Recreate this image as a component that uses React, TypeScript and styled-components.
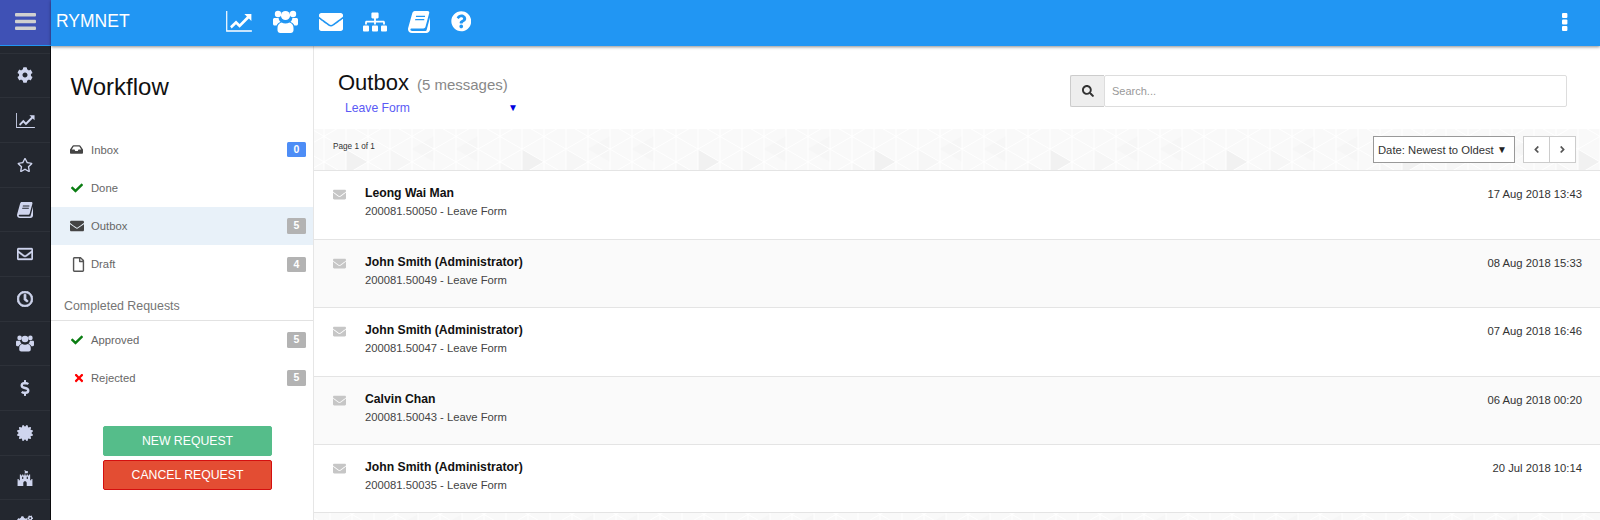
import React from "react";
import styled, { createGlobalStyle } from "styled-components";
import {
  FaCertificate, FaCheck, FaCog, FaCogs,
  FaEnvelope, FaFortAwesome, FaInbox, FaQuestionCircle, FaRegClock, FaRegEnvelope, FaRegFile, FaRegStar,
  FaSearch, FaSitemap, FaTimes, FaDollarSign, FaAngleLeft, FaAngleRight,
} from "react-icons/fa";

type IconProps = { size?: number };

const LineChartIcon = ({ size = 26 }: IconProps) => (
  <svg width={size} height={size * 0.8} viewBox="0 0 26 21" fill="currentColor">
    <path d="M0 0h1.2v19.4H26V21H0z" />
    <path d="M4 15.5l6-6 3.6 3.6L21 5.6l-2.6-2.6H25.5v7l-2.5-2.5-9.4 9.4-3.6-3.6-4.4 4.4z" />
  </svg>
);

const UsersIcon = ({ size = 25 }: IconProps) => (
  <svg width={size} height={size * 0.92} viewBox="0 0 25 23" fill="currentColor">
    <circle cx="5" cy="4" r="3.2" />
    <circle cx="20" cy="4" r="3.2" />
    <circle cx="12.5" cy="5.5" r="4.6" />
    <path d="M0 9.5C0 8.6.7 8 1.6 8h4c.2 1.6.9 3 2 4-1.8.6-3.2 1.8-4 3.5H1.6C.7 15.5 0 14.900 0 14zM25 9.500c0-.9-.7-1.500-1.600-1.500h-4c-.2 1.600-.9 3-2 4 1.800.6 3.200 1.800 4 3.500h2c.9 0 1.600-.6 1.600-1.500z" />
    <path d="M8.500 12.500c2.400 1.400 5.600 1.400 8 0 2.500.6 4 2.800 4 5.500v2.200c0 1.600-1.200 2.800-2.800 2.800H7.300c-1.600 0-2.800-1.200-2.800-2.800V18c0-2.700 1.500-4.900 4-5.500z" />
  </svg>
);

const BookIcon = ({ size = 22 }: IconProps) => (
  <svg width={size} height={size} viewBox="0 0 23 23" fill="currentColor">
    <path d="M7 0h13.500c1.300 0 2 1 1.700 2.200L18.300 16.500c-.3 1.100-1.200 1.800-2.300 1.800H4c-1 0-1.600.5-1.500 1.300.100.7.7 1.200 1.700 1.200h14.200c.5 0 .8-.3 1-.8L23 6.700v13c-.4 1.900-1.900 3.300-3.800 3.300H4.200C1.800 23 0 21.300 0 19c0-.6.100-1.200.3-1.800L4.400 2.500C4.800 1 5.800 0 7 0z" />
    <path d="M8.500 5h9.300v1.300H8.200zM7.700 8.300H17v1.300H7.300z" fill="var(--book-line, #2196f3)" />
  </svg>
);

const BarsIcon = () => (
  <svg width="21" height="17" viewBox="0 0 21 17" fill="currentColor">
    <rect width="21" height="3.600" rx="1" />
    <rect y="6.700" width="21" height="3.600" rx="1" />
    <rect y="13.400" width="21" height="3.600" rx="1" />
  </svg>
);

const KebabIcon = () => (
  <svg width="6" height="18" viewBox="0 0 6 18" fill="currentColor">
    <rect width="5.400" height="5" rx="1" />
    <rect y="6.500" width="5.400" height="5" rx="1" />
    <rect y="13" width="5.400" height="5" rx="1" />
  </svg>
);

const tile = (() => {
  const w = 176;
  const h = 50.8;
  const r = 25.4;
  let lines = "";
  for (let c = 0; c <= 8; c++) {
    lines += `M${c * 22} 0V${h}`;
    for (let k = -2; k < 4; k++) {
      const y = (c % 2 === 0 ? 7.3 : 20) + k * r;
      lines += `M${c * 22} ${y}l22 12.7M${c * 22} ${y}l22 -12.7`;
    }
  }
  const svg = `<svg xmlns="http://www.w3.org/2000/svg" width="${w}" height="${h}"><rect width="${w}" height="${h}" fill="#f9f9f9"/><g fill="#f6f6f6"><path d="M66 20v25.400L88 32.700z"/><path d="M110 7.300v25.400L88 20z"/><path d="M154 7.300v25.400L132 20z"/><path d="M0 32.700v18.100H22V45.400z"/></g><path d="M22 20v25.400L44 32.700z" fill="#f1f1f1"/><path d="${lines}" stroke="#fff" stroke-width="1" fill="none"/></svg>`;
  return encodeURIComponent(svg);
})();

const Global = createGlobalStyle`
  html, body { margin: 0; padding: 0; height: 100%; overflow: hidden; background: #fff; }
  body { font-family: "Liberation Sans", Arial, sans-serif; }
`;

const Page = styled.div`
  width: 1600px;
  height: 520px;
  display: grid;
  grid-template-columns: 51px 1fr;
  grid-template-rows: 46px 1fr;
  overflow: hidden;
`;

const MenuButton = styled.div`
  background: #3f51b5;
  color: #d0d0d0;
  display: flex;
  align-items: center;
  justify-content: center;
  border-bottom: 1px solid #2196f3;
  box-sizing: border-box;
  padding-bottom: 2px;
`;

const TopBar = styled.header`
  background: #2196f3;
  color: #fff;
  display: flex;
  align-items: center;
  padding-left: 5px;
  padding-right: 32px;
  box-shadow: 0 1px 3px rgba(0, 0, 0, 0.45);
  position: relative;
  z-index: 2;
`;

const Brand = styled.div`
  font-size: 17.5px;
  width: 170px;
  margin-top: -3px;
`;

const TopIcons = styled.nav`
  display: flex;
  align-items: center;
  gap: 18px;
  flex: 1;
  margin-top: -3px;
  --book-line: #2196f3;
`;

const TopIcon = styled.span<{ $w: number; $size?: number }>`
  width: ${(p) => p.$w}px;
  display: flex;
  justify-content: center;
  font-size: ${(p) => p.$size ?? 24}px;
`;

const Kebab = styled.div`
  display: flex;
  margin-top: -3px;
`;

const Rail = styled.aside`
  background: #23272f;
  border-right: 1px solid #0c0c0e;
  padding-top: 6.6px;
  overflow: hidden;
  display: flex;
  flex-direction: column;
  box-sizing: border-box;
  --book-line: #23272f;
`;

const RailItem = styled.div`
  flex: 0 0 44.7px;
  display: flex;
  align-items: center;
  justify-content: center;
  color: #cfd5ee;
  font-size: 16px;
  border-top: 1px solid #2d3139;
  box-sizing: border-box;
`;

const Body = styled.div`
  display: grid;
  grid-template-columns: 263px 1fr;
  min-height: 0;
`;

const Side = styled.section`
  border-right: 1px solid #e6e6e6;
  display: flex;
  flex-direction: column;
`;

const SideTitle = styled.h2`
  margin: 0;
  font-weight: 400;
  font-size: 24px;
  line-height: 28px;
  color: #111;
  padding: 27px 0 0 19.5px;
  height: 57.600px;
  flex: none;
`;

const NavRow = styled.div<{ $active?: boolean }>`
  height: 38.2px;
  flex: none;
  display: flex;
  align-items: center;
  background: ${(p) => (p.$active ? "#e8f1f9" : "transparent")};
  padding: 0 7px 0 0;
  font-size: 11.25px;
  color: #666;
`;

const NavIcon = styled.span<{ $color: string; $size?: number; $left?: number }>`
  width: 40px;
  padding-left: ${(p) => p.$left ?? 19}px;
  box-sizing: border-box;
  color: ${(p) => p.$color};
  font-size: ${(p) => p.$size ?? 13}px;
  display: flex;
  align-items: center;
`;

const NavLabel = styled.span`
  flex: 1;
`;

const Badge = styled.span<{ $blue?: boolean }>`
  width: 19px;
  height: 15.5px;
  background: ${(p) => (p.$blue ? "#4d8df6" : "#b3b3b3")};
  border-radius: 1.5px;
  color: #fff;
  font-size: 10.5px;
  font-weight: 700;
  line-height: 14px;
  text-align: center;
`;

const GroupTitle = styled.div`
  font-size: 12.4px;
  color: #757575;
  padding: 16px 0 6.5px 13px;
  line-height: 14px;
  border-bottom: 1px solid #e2e2e2;
  flex: none;
`;

const ActionStack = styled.div`
  display: flex;
  flex-direction: column;
  gap: 4px;
  padding: 29px 0 0 52px;
`;

const ActionButton = styled.button<{ $bg: string; $edge: string }>`
  width: 169px;
  height: 30px;
  background: ${(p) => p.$bg};
  border: 1px solid ${(p) => p.$edge};
  border-radius: 2px;
  color: #fff;
  font: 400 12.25px "Liberation Sans", Arial, sans-serif;
  padding: 0;
`;

const Main = styled.main`
  display: flex;
  flex-direction: column;
  min-width: 0;
`;

const MainHead = styled.div`
  height: 83px;
  flex: none;
  display: flex;
  justify-content: space-between;
  padding: 0 33px 0 24px;
  box-sizing: border-box;
`;

const TitleBlock = styled.div`
  width: 180px;
  padding-top: 24px;
`;

const MainTitle = styled.h1`
  margin: 0;
  font-weight: 400;
  font-size: 22px;
  line-height: 26px;
  color: #111;
  white-space: nowrap;
`;

const TitleCount = styled.small`
  font-size: 15px;
  color: #888;
  margin-left: 8px;
`;

const FormPicker = styled.div`
  display: flex;
  justify-content: space-between;
  align-items: center;
  font-size: 12.2px;
  color: #5a5af5;
  padding: 2px 0 0 7px;
  line-height: 16px;
  &::after { content: "▼"; color: #0000e0; font-size: 10px; }
`;

const SearchGroup = styled.div`
  display: flex;
  height: 32px;
  margin-top: 29px;
  width: 497px;
`;

const SearchAddon = styled.div`
  width: 34px;
  background: #eee;
  border: 1px solid #ccc;
  border-right: 0;
  border-radius: 2px 0 0 2px;
  display: flex;
  align-items: center;
  justify-content: center;
  color: #333;
  font-size: 12px;
  box-sizing: border-box;
`;

const SearchInput = styled.input`
  flex: 1;
  border: 1px solid #ddd;
  border-radius: 2px;
  padding: 0 7px;
  font: 11px "Liberation Sans", Arial, sans-serif;
  &::placeholder { color: #999; }
`;

const Strip = styled.div<{ $grow?: boolean }>`
  background: #f9f9f9 url("data:image/svg+xml,${tile}");
  background-position: ${(p) => (p.$grow ? "-6px -6px" : "10px 0")};
  ${(p) => (p.$grow ? "flex: 1;" : "height: 41.4px; flex: none;")}
  display: flex;
  align-items: center;
  padding: 0 24px 0 19px;
`;

const PageNote = styled.div`
  flex: 1;
  font-size: 8.2px;
  color: #333;
  margin-top: -6px;
`;

const SortBox = styled.div`
  width: 142px;
  height: 27px;
  box-sizing: border-box;
  border: 1px solid #999;
  background: #fff;
  display: flex;
  align-items: center;
  justify-content: space-between;
  padding: 0 7px 0 4px;
  font-size: 11.25px;
  color: #333;
  &::after { content: "▼"; font-size: 10px; color: #222; }
`;

const Pager = styled.div`
  margin-left: 8px;
  display: flex;
  height: 27px;
  border: 1px solid #ccc;
  box-sizing: border-box;
  background: #fff;
`;

const PagerCell = styled.div`
  width: 25px;
  display: flex;
  align-items: center;
  justify-content: center;
  color: #555;
  font-size: 11px;
  & + & { border-left: 1px solid #ccc; }
`;

const Row = styled.article<{ $alt: boolean }>`
  height: 68.4px;
  flex: none;
  box-sizing: border-box;
  border-top: 1px solid #e4e4e4;
  background: ${(p) => (p.$alt ? "#fafafa" : "#fff")};
  display: grid;
  grid-template-columns: 32px 1fr auto;
  padding: 15px 18px 0 19px;
`;

const RowIcon = styled.div`
  color: #c6c6c6;
  font-size: 13px;
  padding-top: 2px;
`;

const RowName = styled.div`
  font-size: 12.2px;
  font-weight: 700;
  color: #111;
  line-height: 14px;
`;

const RowSub = styled.div`
  font-size: 11.25px;
  color: #444;
  margin-top: 5px;
  line-height: 13px;
`;

const RowDate = styled.div`
  font-size: 11.25px;
  color: #333;
  line-height: 14px;
  padding-top: 1px;
`;

const RowEnd = styled.div`
  height: 1px;
  background: #e4e4e4;
  flex: none;
`;

const railIcons = [
  <FaCog key="a" />,
  <LineChartIcon key="b" size={19} />,
  <FaRegStar key="c" />,
  <BookIcon key="d" size={16} />,
  <FaRegEnvelope key="e" stroke="currentColor" strokeWidth={12} />,
  <FaRegClock key="f" stroke="currentColor" strokeWidth={30} />,
  <UsersIcon key="g" size={18} />,
  <FaDollarSign key="h" />,
  <FaCertificate key="i" />,
  <FaFortAwesome key="j" />,
  <FaCogs key="k" />,
];

const messages = [
  ["Leong Wai Man", "200081.50050 - Leave Form", "17 Aug 2018 13:43"],
  ["John Smith (Administrator)", "200081.50049 - Leave Form", "08 Aug 2018 15:33"],
  ["John Smith (Administrator)", "200081.50047 - Leave Form", "07 Aug 2018 16:46"],
  ["Calvin Chan", "200081.50043 - Leave Form", "06 Aug 2018 00:20"],
  ["John Smith (Administrator)", "200081.50035 - Leave Form", "20 Jul 2018 10:14"],
];

export default function App() {
  return (
    <Page>
      <Global />
      <MenuButton><BarsIcon /></MenuButton>
      <TopBar>
        <Brand>RYMNET</Brand>
        <TopIcons>
          <TopIcon $w={26}><LineChartIcon /></TopIcon>
          <TopIcon $w={31}><UsersIcon /></TopIcon>
          <TopIcon $w={24}><FaEnvelope /></TopIcon>
          <TopIcon $w={28}><FaSitemap /></TopIcon>
          <TopIcon $w={24}><BookIcon /></TopIcon>
          <TopIcon $w={24} $size={20.5}><FaQuestionCircle /></TopIcon>
        </TopIcons>
        <Kebab><KebabIcon /></Kebab>
      </TopBar>
      <Rail>
        {railIcons.map((icon, i) => <RailItem key={i}>{icon}</RailItem>)}
      </Rail>
      <Body>
        <Side>
          <SideTitle>Workflow</SideTitle>
          <NavRow><NavIcon $color="#444"><FaInbox /></NavIcon><NavLabel>Inbox</NavLabel><Badge $blue>0</Badge></NavRow>
          <NavRow><NavIcon $color="#0a7d12" $left={20} $size={12}><FaCheck /></NavIcon><NavLabel>Done</NavLabel></NavRow>
          <NavRow $active><NavIcon $color="#444" $size={14}><FaEnvelope /></NavIcon><NavLabel>Outbox</NavLabel><Badge>5</Badge></NavRow>
          <NavRow><NavIcon $color="#555" $left={20} $size={15}><FaRegFile /></NavIcon><NavLabel>Draft</NavLabel><Badge>4</Badge></NavRow>
          <GroupTitle>Completed Requests</GroupTitle>
          <NavRow><NavIcon $color="#0a7d12" $left={20} $size={12}><FaCheck /></NavIcon><NavLabel>Approved</NavLabel><Badge>5</Badge></NavRow>
          <NavRow><NavIcon $color="#f00" $left={21.5} $size={12}><FaTimes /></NavIcon><NavLabel>Rejected</NavLabel><Badge>5</Badge></NavRow>
          <ActionStack>
            <ActionButton $bg="#55bd8a" $edge="#55bd8a">NEW REQUEST</ActionButton>
            <ActionButton $bg="#e34d33" $edge="#d40f0f">CANCEL REQUEST</ActionButton>
          </ActionStack>
        </Side>
        <Main>
          <MainHead>
            <TitleBlock>
              <MainTitle>Outbox<TitleCount>(5 messages)</TitleCount></MainTitle>
              <FormPicker>Leave Form</FormPicker>
            </TitleBlock>
            <SearchGroup>
              <SearchAddon><FaSearch /></SearchAddon>
              <SearchInput placeholder="Search..." />
            </SearchGroup>
          </MainHead>
          <Strip>
            <PageNote>Page 1 of 1</PageNote>
            <SortBox>Date: Newest to Oldest</SortBox>
            <Pager>
              <PagerCell><FaAngleLeft /></PagerCell>
              <PagerCell><FaAngleRight /></PagerCell>
            </Pager>
          </Strip>
          {messages.map(([name, sub, date], i) => (
            <Row key={sub} $alt={i % 2 === 1}>
              <RowIcon><FaEnvelope /></RowIcon>
              <div>
                <RowName>{name}</RowName>
                <RowSub>{sub}</RowSub>
              </div>
              <RowDate>{date}</RowDate>
            </Row>
          ))}
          <RowEnd />
          <Strip $grow />
        </Main>
      </Body>
    </Page>
  );
}
